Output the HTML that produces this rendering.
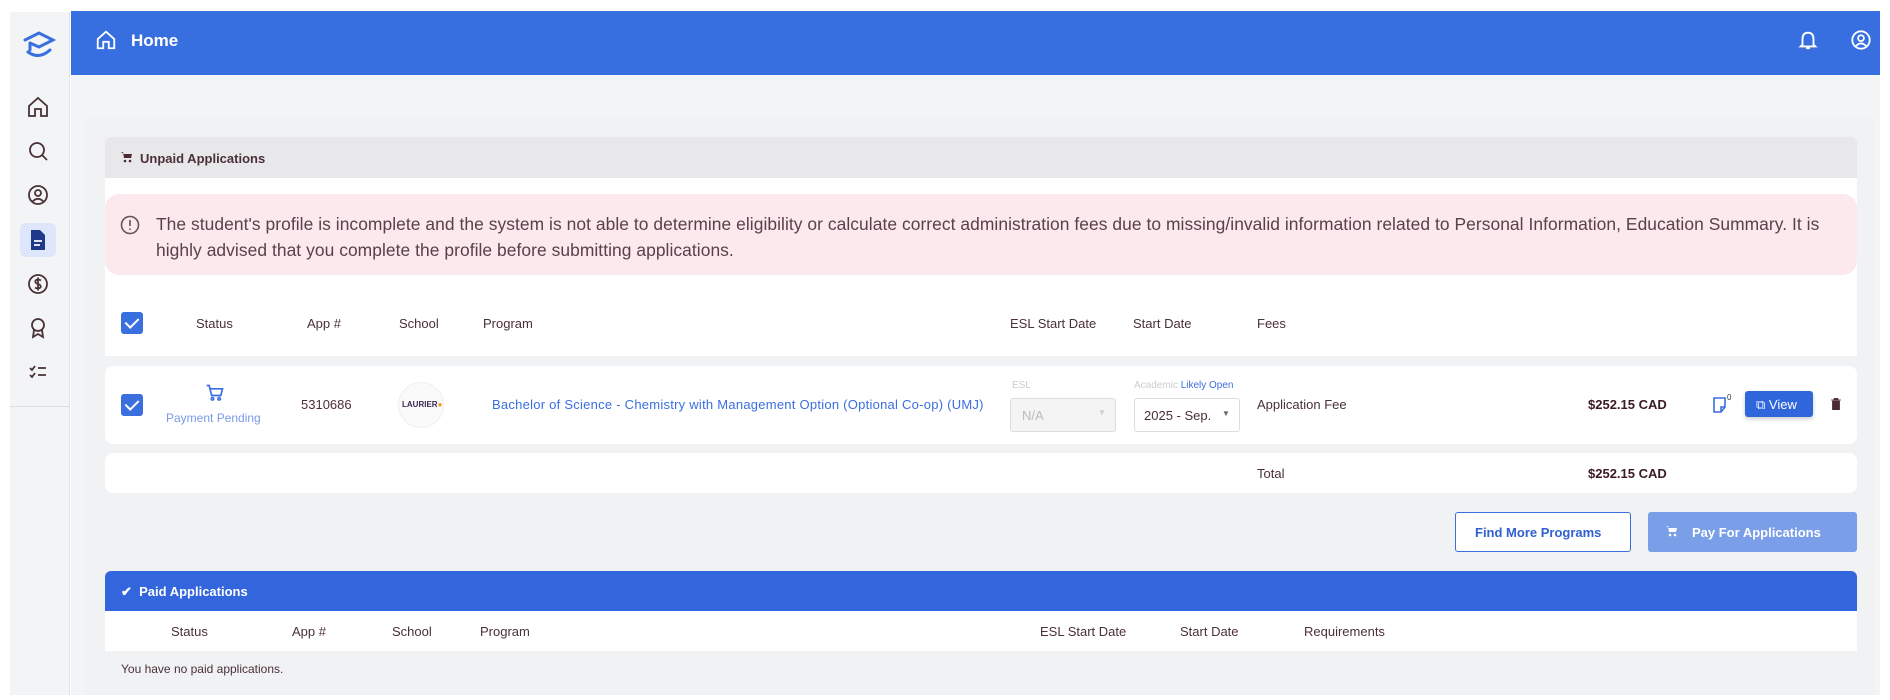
<!DOCTYPE html><html><head><style>
*{box-sizing:border-box;margin:0;padding:0}
body{width:1890px;height:700px;background:#fff;font-family:"Liberation Sans",sans-serif;position:relative;overflow:hidden;color:#4a2a33}
.a{position:absolute}
.t{position:absolute;font-size:13px;color:#4a3038;white-space:nowrap}
.cb{position:absolute;width:22px;height:22px;background:#3a6fe0;border-radius:3px}
.cb:after{content:"";position:absolute;left:7px;top:3px;width:6px;height:11px;border:solid #fff;border-width:0 2px 2px 0;transform:rotate(45deg)}
.ic{position:absolute;left:26px;width:24px;height:24px}
</style></head><body>
<div class="a" style="left:10px;top:12px;width:60px;height:683px;background:#f3f4f6;border-right:1px solid #e3e4e8"></div>
<div class="a" style="left:10px;top:406px;width:60px;height:1px;background:#ddd"></div>
<svg class="a" style="left:22px;top:30px" width="34" height="28" viewBox="0 0 34 28" fill="none" stroke="#3a6fe0" stroke-width="3" stroke-linecap="round"><path d="M3 10 L17 3 L31 10 L17 17 L8 13 M8 13 V20 M6 22 Q17 30 28 20"/></svg>
<svg class="ic" style="top:95px" viewBox="0 0 24 24" fill="none" stroke="#4a3038" stroke-width="1.8"><path d="M3 11 L12 3 L21 11 V21 H15 V14 H9 V21 H3 Z"/></svg>
<svg class="ic" style="top:139px" viewBox="0 0 24 24" fill="none" stroke="#4a3038" stroke-width="1.8"><circle cx="11" cy="11" r="7"/><path d="M16 16 L21 21"/></svg>
<svg class="ic" style="top:183px" viewBox="0 0 24 24" fill="none" stroke="#4a3038" stroke-width="1.8"><circle cx="12" cy="12" r="9"/><circle cx="12" cy="10" r="3"/><path d="M6.5 18.5 Q12 13 17.5 18.5"/></svg>
<div class="a" style="left:20px;top:223px;width:36px;height:34px;background:#dde6fb;border-radius:5px"></div>
<svg class="ic" style="top:228px" viewBox="0 0 24 24"><path d="M5 2 H14 L19 7 V22 H5 Z" fill="#1f3a8a"/><path d="M8 13 H16 M8 17 H14" stroke="#fff" stroke-width="1.8"/></svg>
<svg class="ic" style="top:272px" viewBox="0 0 24 24" fill="none" stroke="#4a3038" stroke-width="1.8"><circle cx="12" cy="12" r="9"/><path d="M15 8.5 Q12 6.5 9.5 8.5 Q8.5 11 12 12 Q15.5 13 14.5 15.5 Q12 17.5 9 15.5 M12 5.5 V18.5"/></svg>
<svg class="ic" style="top:316px" viewBox="0 0 24 24" fill="none" stroke="#4a3038" stroke-width="1.8"><circle cx="12" cy="9" r="6"/><path d="M8 14 L7 21 L12 18 L17 21 L16 14"/></svg>
<svg class="ic" style="top:360px" viewBox="0 0 24 24" fill="none" stroke="#4a3038" stroke-width="1.8"><path d="M4 8 L6 10 L9 6 M12 8 H20 M4 15 L6 17 L9 13 M12 15 H20"/></svg>
<div class="a" style="left:71px;top:11px;width:1809px;height:64px;background:#376fe0"></div>
<svg class="a" style="left:95px;top:29px" width="22" height="22" viewBox="0 0 24 24" fill="none" stroke="#fff" stroke-width="2"><path d="M3 11 L12 3 L21 11 V21 H15 V14 H9 V21 H3 Z"/></svg>
<div class="t" style="left:131px;top:31px;color:#fff;font-size:17px;font-weight:bold">Home</div>
<svg class="a" style="left:1797px;top:28px" width="22" height="24" viewBox="0 0 24 24" fill="none" stroke="#fff" stroke-width="2"><path d="M6 17 V11 Q6 4 12 4 Q18 4 18 11 V17 L20 19 H4 Z M10 21 H14"/></svg>
<svg class="a" style="left:1850px;top:29px" width="22" height="22" viewBox="0 0 24 24" fill="none" stroke="#fff" stroke-width="2"><circle cx="12" cy="12" r="9.5"/><circle cx="12" cy="10" r="3.2"/><path d="M6.5 18.5 Q12 13 17.5 18.5"/></svg>
<div class="a" style="left:71px;top:75px;width:1809px;height:620px;background:#f3f4f6"></div>
<div class="a" style="left:84px;top:118px;width:1790px;height:577px;background:#f1f2f4"></div>
<div class="a" style="left:105px;top:137px;width:1752px;height:41px;background:#e8e8ea;border-radius:6px 6px 0 0"></div>
<svg class="a" style="left:121px;top:152px" width="12" height="11" viewBox="0 0 12 11"><path d="M0 0 H2 L3 6 H10 L11 2 H3" fill="#4a2a33"/><circle cx="4" cy="9" r="1.3" fill="#4a2a33"/><circle cx="9" cy="9" r="1.3" fill="#4a2a33"/></svg>
<div class="t" style="left:140px;top:151px;font-weight:bold;font-size:13px">Unpaid Applications</div>
<div class="a" style="left:105px;top:178px;width:1752px;height:178px;background:#fff"></div>
<div class="a" style="left:105px;top:194px;width:1752px;height:81px;background:#fbe9ee;border-radius:14px"></div>
<svg class="a" style="left:120px;top:215px" width="20" height="20" viewBox="0 0 20 20" fill="none" stroke="#6a5058" stroke-width="1.6"><circle cx="10" cy="10" r="8.5"/><path d="M10 5 V11 M10 13.5 V15"/></svg>
<div class="t" style="left:156px;top:211px;font-size:17.4px;line-height:26px;color:#5a4048;white-space:normal;width:1672px;letter-spacing:0.06px">The student's profile is incomplete and the system is not able to determine eligibility or calculate correct administration fees due to missing/invalid information related to Personal Information, Education Summary. It is highly advised that you complete the profile before submitting applications.</div>
<div class="cb" style="left:121px;top:312px"></div>
<div class="t" style="left:196px;top:316px">Status</div>
<div class="t" style="left:307px;top:316px">App #</div>
<div class="t" style="left:399px;top:316px">School</div>
<div class="t" style="left:483px;top:316px">Program</div>
<div class="t" style="left:1010px;top:316px">ESL Start Date</div>
<div class="t" style="left:1133px;top:316px">Start Date</div>
<div class="t" style="left:1257px;top:316px">Fees</div>
<div class="a" style="left:105px;top:366px;width:1752px;height:78px;background:#fff;border-radius:8px"></div>
<div class="cb" style="left:121px;top:394px"></div>
<svg class="a" style="left:205px;top:383px" width="20" height="20" viewBox="0 0 24 24" fill="none" stroke="#3a6fe0" stroke-width="2"><path d="M2 3 H5 L8 15 H19 L21 7 H6"/><circle cx="9" cy="19" r="1.5"/><circle cx="17" cy="19" r="1.5"/></svg>
<div class="t" style="left:166px;top:411px;color:#7a9be6;font-size:12px">Payment Pending</div>
<div class="t" style="left:301px;top:397px">5310686</div>
<div class="a" style="left:398px;top:382px;width:46px;height:46px;border-radius:50%;background:#fafafa;border:1px solid #f0f0f0"></div>
<div class="t" style="left:402px;top:400px;font-size:8px;color:#3a2a55;font-weight:bold">LAURIER<span style="color:#e8a020">●</span></div>
<div class="t" style="left:492px;top:397px;color:#3a6fe0;letter-spacing:0.25px">Bachelor of Science - Chemistry with Management Option (Optional Co-op) (UMJ)</div>
<div class="t" style="left:1012px;top:380px;font-size:10px;color:#ccc">ESL</div>
<div class="a" style="left:1010px;top:398px;width:106px;height:34px;border:1px solid #ddd;border-radius:3px;background:#f4f4f4"></div>
<div class="t" style="left:1022px;top:408px;color:#bbb">N/A</div>
<div class="t" style="left:1098px;top:408px;color:#ccc;font-size:8px">▼</div>
<div class="t" style="left:1134px;top:380px;font-size:10px;color:#ccc">Academic <span style="color:#3a6fe0">Likely Open</span></div>
<div class="a" style="left:1134px;top:398px;width:106px;height:34px;border:1px solid #ddd;border-radius:3px;background:#fff"></div>
<div class="t" style="left:1144px;top:408px">2025 - Sep.</div>
<div class="t" style="left:1222px;top:409px;font-size:8px;color:#666">▼</div>
<div class="t" style="left:1257px;top:397px">Application Fee</div>
<div class="t" style="left:1588px;top:397px;font-weight:bold;color:#3a1a25">$252.15 CAD</div>
<svg class="a" style="left:1712px;top:392px" width="22" height="24" viewBox="0 0 22 24" fill="none" stroke="#3a6fe0" stroke-width="1.6"><path d="M2 6 H13 V15 L9 20 H2 Z M9 20 V15 H13"/><text x="15" y="8" font-size="8" fill="#333" stroke="none" font-family="Liberation Sans">0</text></svg>
<div class="a" style="left:1745px;top:391px;width:68px;height:26px;background:#2f66dc;border-radius:3px;box-shadow:0 2px 4px rgba(0,0,0,.2)"></div>
<div class="t" style="left:1756px;top:397px;color:#fff">⧉ View</div>
<svg class="a" style="left:1831px;top:398px" width="10" height="12" viewBox="0 0 10 12"><path d="M0 2 H10 M3 2 V0.5 H7 V2 M1.5 3 H8.5 V12 H1.5 Z" fill="#4a2a33" stroke="#4a2a33" stroke-width=".8"/></svg>
<div class="a" style="left:105px;top:453px;width:1752px;height:40px;background:#fff;border-radius:8px"></div>
<div class="t" style="left:1257px;top:466px">Total</div>
<div class="t" style="left:1588px;top:466px;font-weight:bold;color:#3a1a25">$252.15 CAD</div>
<div class="a" style="left:1455px;top:512px;width:176px;height:40px;border:1.5px solid #3a6fe0;border-radius:3px;background:#fff"></div>
<div class="t" style="left:1475px;top:525px;color:#2f5fd0;font-weight:bold">Find More Programs</div>
<div class="a" style="left:1648px;top:512px;width:209px;height:40px;background:#7a9ee8;border-radius:3px"></div>
<svg class="a" style="left:1666px;top:526px" width="12" height="11" viewBox="0 0 12 11"><path d="M0 0 H2 L3 6 H10 L11 2 H3" fill="#fff"/><circle cx="4" cy="9" r="1.3" fill="#fff"/><circle cx="9" cy="9" r="1.3" fill="#fff"/></svg>
<div class="t" style="left:1692px;top:525px;color:#fff;font-weight:bold">Pay For Applications</div>
<div class="a" style="left:105px;top:571px;width:1752px;height:40px;background:#3366dd;border-radius:6px 6px 0 0"></div>
<div class="t" style="left:121px;top:584px;color:#fff;font-weight:bold">✔&nbsp; Paid Applications</div>
<div class="a" style="left:105px;top:611px;width:1752px;height:40px;background:#fff"></div>
<div class="t" style="left:171px;top:624px">Status</div>
<div class="t" style="left:292px;top:624px">App #</div>
<div class="t" style="left:392px;top:624px">School</div>
<div class="t" style="left:480px;top:624px">Program</div>
<div class="t" style="left:1040px;top:624px">ESL Start Date</div>
<div class="t" style="left:1180px;top:624px">Start Date</div>
<div class="t" style="left:1304px;top:624px">Requirements</div>
<div class="t" style="left:121px;top:662px;font-size:12px">You have no paid applications.</div>
</body></html>
